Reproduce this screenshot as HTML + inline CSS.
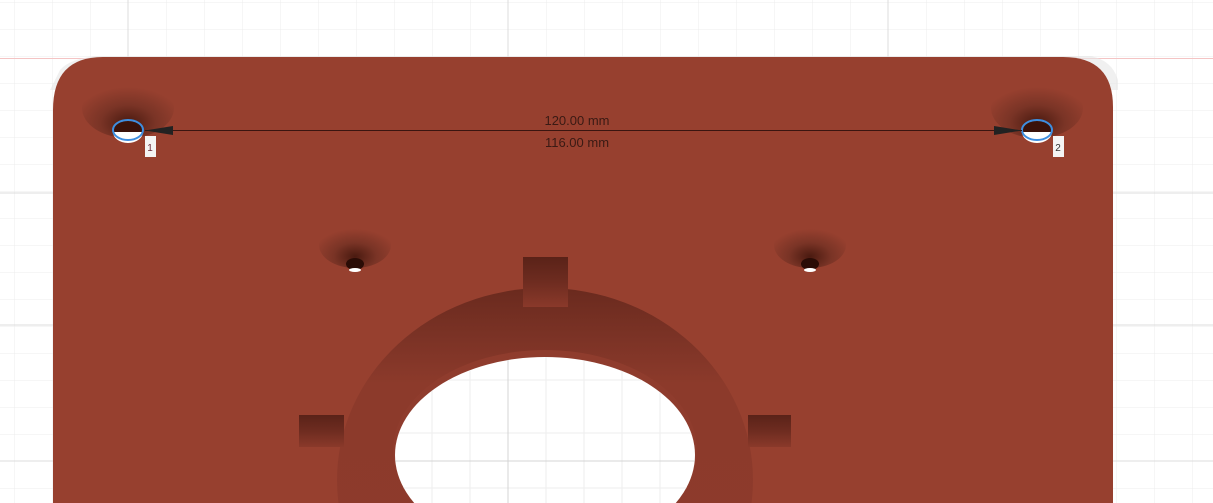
<!DOCTYPE html>
<html><head><style>
html,body{margin:0;padding:0;background:#fff;overflow:hidden;width:1213px;height:503px}
svg{display:block}
text{font-family:"Liberation Sans",sans-serif}
</style></head><body>
<svg width="1213" height="503" viewBox="0 0 1213 503" xmlns="http://www.w3.org/2000/svg">
<defs>
<pattern id="g" width="38" height="27" patternUnits="userSpaceOnUse" x="14" y="2">
<path d="M0 0V27M0 0H38" stroke="#ececec" stroke-width="1" fill="none"/>
</pattern>
<radialGradient id="cs" cx="0.5" cy="0.75" r="0.6">
<stop offset="0" stop-color="#4a1a10"/><stop offset="0.5" stop-color="#7a3426"/><stop offset="1" stop-color="#97402f"/>
</radialGradient>
<linearGradient id="ring" x1="0" y1="0" x2="0" y2="1">
<stop offset="0" stop-color="#6a2a1e"/><stop offset="0.12" stop-color="#7a3225"/><stop offset="0.25" stop-color="#8c3a2b"/><stop offset="1" stop-color="#8e3b2c"/>
</linearGradient>
<linearGradient id="tab" x1="0" y1="0" x2="0" y2="1">
<stop offset="0" stop-color="#5a2218"/><stop offset="0.5" stop-color="#6e2c20"/><stop offset="1" stop-color="#8a392a"/>
</linearGradient>
<clipPath id="hc"><ellipse cx="545" cy="455" rx="150" ry="98"/></clipPath>
</defs>
<rect width="1213" height="503" fill="url(#g)"/>
<g stroke="#dcdcdc" stroke-width="1">
<path d="M128 0V503M508 0V503M888 0V503M0 193H1213M0 325H1213M0 461H1213"/>
</g>
<line x1="0" y1="58.5" x2="1213" y2="58.5" stroke="#f4c4c4"/>
<path d="M60 70 Q70 58 100 56 L1090 56 Q1112 60 1118 80 L1118 90 L50 90Z" fill="#e6e6e6" opacity="0.6"/>
<path d="M53 110 Q53 57 103 57 L1063 57 Q1113 57 1113 107 L1113 503 L53 503Z" fill="#97402f"/>
<ellipse cx="545" cy="480" rx="208" ry="192" fill="url(#ring)"/>
<rect x="523" y="257" width="45" height="50" fill="url(#tab)"/>
<rect x="299" y="415" width="45" height="32" fill="url(#tab)"/>
<rect x="748" y="415" width="43" height="32" fill="url(#tab)"/>
<ellipse cx="545" cy="450" rx="152" ry="100" fill="#8f3c2d"/>
<ellipse cx="545" cy="455" rx="150" ry="98" fill="#fff"/>
<g clip-path="url(#hc)" stroke="#eee" stroke-width="1">
<path d="M432 350V503M470 350V503M546 350V503M584 350V503M622 350V503M660 350V503M390 380H700M390 433H700M390 488H700"/>
<path d="M508 350V503M390 461H700" stroke="#d4d4d4"/>
</g>
<ellipse cx="128" cy="108" rx="46" ry="30" fill="url(#cs)"/>
<ellipse cx="1037" cy="108" rx="46" ry="30" fill="url(#cs)"/>
<ellipse cx="355" cy="245" rx="36" ry="23" fill="url(#cs)"/>
<ellipse cx="810" cy="245" rx="36" ry="23" fill="url(#cs)"/>
<ellipse cx="355" cy="264" rx="9" ry="6" fill="#2a0c06"/>
<ellipse cx="810" cy="264" rx="9" ry="6" fill="#2a0c06"/>
<ellipse cx="355" cy="270" rx="6" ry="2" fill="#fff"/>
<ellipse cx="810" cy="270" rx="6" ry="2" fill="#fff"/>
<ellipse cx="128" cy="132" rx="15" ry="11" fill="#fff"/>
<path d="M114 129 A14 8 0 0 1 142 129 L142 132 L114 132Z" fill="#3a120a"/>
<ellipse cx="128" cy="130" rx="15" ry="10" fill="none" stroke="#3d8ee0" stroke-width="2"/>
<ellipse cx="1037" cy="132" rx="15" ry="11" fill="#fff"/>
<path d="M1023 129 A14 8 0 0 1 1051 129 L1051 132 L1023 132Z" fill="#3a120a"/>
<ellipse cx="1037" cy="130" rx="15" ry="10" fill="none" stroke="#3d8ee0" stroke-width="2"/>
<line x1="145" y1="130.5" x2="1022" y2="130.5" stroke="#3a1510" stroke-width="1"/>
<path d="M145 130.5 L173 126 L173 135Z" fill="#222"/>
<path d="M1022 130.5 L994 126 L994 135Z" fill="#222"/>
<text x="577" y="125" font-size="13" fill="#3a1a14" text-anchor="middle">120.00 mm</text>
<text x="577" y="147" font-size="13" fill="#3a1a14" text-anchor="middle">116.00 mm</text>
<rect x="145" y="136" width="11" height="21" fill="#f4f4f4"/>
<text x="150" y="151" font-size="10" fill="#6a2a3a" text-anchor="middle">1</text>
<rect x="1053" y="136" width="11" height="21" fill="#f4f4f4"/>
<text x="1058" y="151" font-size="10" fill="#333" text-anchor="middle">2</text>
</svg>
</body></html>
